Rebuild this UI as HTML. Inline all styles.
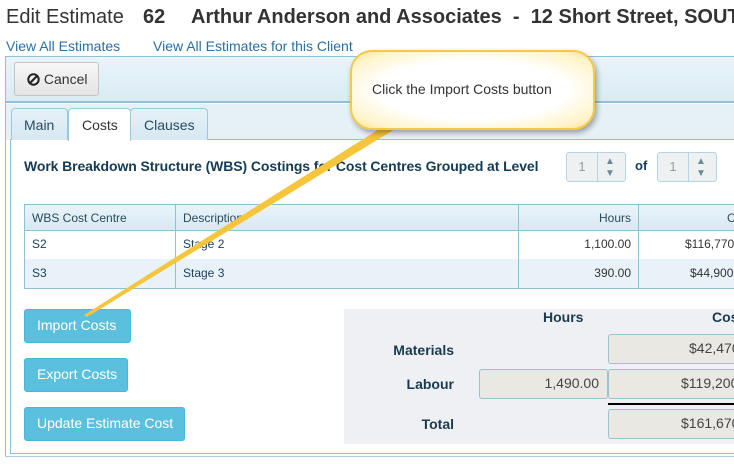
<!DOCTYPE html>
<html><head><meta charset="utf-8"><style>
*{box-sizing:border-box;margin:0;padding:0}
body{width:734px;height:464px;overflow:hidden;background:#fff;font-family:"Liberation Sans",Arial,sans-serif;position:relative}
.a{position:absolute;white-space:nowrap}
.btn{position:absolute;background:#5bc0de;border:1px solid #46b8da;border-radius:3px;color:#fff;font-size:14px;padding-left:12px;line-height:31px}
.inp{position:absolute;background:#eae8e2;border:1px solid #98c2d4;border-radius:3px;text-align:right;padding-right:8px;font-size:14px;color:#444;line-height:27px}
.lbl{position:absolute;font-weight:bold;font-size:14px;color:#1a3a50;text-align:right}
.td{position:absolute;font-size:12px;color:#1a4060}
.sp{position:absolute;left:38px;top:3px;font-size:10px;color:#6a8a9a;line-height:12px}
</style></head><body>
<div class="a" style="left:6px;top:6px;font-size:20px;color:#333">Edit Estimate</div>
<div class="a" style="left:143px;top:6px;font-size:20px;font-weight:bold;color:#333">62</div>
<div class="a" style="left:191px;top:6px;font-size:20px;font-weight:bold;color:#333">Arthur Anderson and Associates&nbsp; -&nbsp; 12 Short Street, SOUTH</div>
<div class="a" style="left:6px;top:38px;font-size:14px;color:#2a6ea6">View All Estimates</div>
<div class="a" style="left:153px;top:38px;font-size:14px;color:#2a6ea6">View All Estimates for this Client</div>

<div class="a" style="left:5px;top:56px;width:740px;height:401px;border:1px solid #8cc3dc;background:#fff"></div>
<div class="a" style="left:6px;top:57px;width:740px;height:46px;background:linear-gradient(#eaf4f9,#d9ebf4);border-bottom:2px solid #93c0d6"></div>
<div class="a" style="left:14px;top:62px;width:85px;height:34px;border:1px solid #c4c4c4;border-radius:3px;background:linear-gradient(#f7f7f7,#e4e4e4);font-size:14px;color:#333;line-height:32px;padding-left:12px">
<svg width="13" height="13" viewBox="0 0 13 13" style="vertical-align:-2px"><circle cx="6.5" cy="6.5" r="5.2" fill="none" stroke="#222" stroke-width="2"/><line x1="3" y1="10" x2="10" y2="3" stroke="#222" stroke-width="2"/></svg> Cancel</div>
<div class="a" style="left:6px;top:104px;width:740px;height:36px;background:#e6f1f7"></div>
<div class="a" style="left:10px;top:139px;width:740px;height:315px;border-left:1px solid #8cc3dc;border-top:1px solid #8cc3dc;border-bottom:1px solid #8cc3dc;background:#fff"></div>
<div class="a" style="left:11px;top:108px;width:57px;height:32px;border:1px solid #9cc8dc;border-bottom:none;border-radius:4px 4px 0 0;background:linear-gradient(#e6f1f7,#d6e8f2);font-size:14px;color:#2c4a60;padding:8px 0 0 12px">Main</div>
<div class="a" style="left:68px;top:108px;width:63px;height:33px;border:1px solid #9cc8dc;border-bottom:none;border-radius:4px 4px 0 0;background:#fff;font-size:14px;color:#333;padding:8px 0 0 13px">Costs</div>
<div class="a" style="left:130px;top:108px;width:78px;height:32px;border:1px solid #9cc8dc;border-bottom:none;border-radius:4px 4px 0 0;background:linear-gradient(#e6f1f7,#d6e8f2);font-size:14px;color:#2c4a60;padding:8px 0 0 13px">Clauses</div>

<div class="a" style="left:24px;top:158px;font-size:14px;font-weight:bold;color:#143a55;letter-spacing:-0.1px">Work Breakdown Structure (WBS) Costings for Cost Centres Grouped at Level</div>
<div class="a" style="left:566px;top:152px;width:60px;height:30px;border:1px solid #b5d3e2;border-radius:3px;background:#eef1f2"><span style="position:absolute;left:0;width:31px;border-right:1px solid #b5d3e2;height:28px;text-align:center;line-height:28px;font-size:13px;color:#999">1</span><span class="sp">▲<br>▼</span></div>
<div class="a" style="left:635px;top:158px;font-size:13px;font-weight:bold;color:#143a55">of</div>
<div class="a" style="left:657px;top:152px;width:60px;height:30px;border:1px solid #b5d3e2;border-radius:3px;background:#eef1f2"><span style="position:absolute;left:0;width:31px;border-right:1px solid #b5d3e2;height:28px;text-align:center;line-height:28px;font-size:13px;color:#999">1</span><span class="sp">▲<br>▼</span></div>

<div class="a" style="left:24px;top:204px;width:720px;height:85px;border:1px solid #8fc0d6;background:#fff"></div>
<div class="a" style="left:25px;top:205px;width:720px;height:26px;background:linear-gradient(#eaf4f9,#d7e9f2);border-bottom:1px solid #8fc0d6"></div>
<div class="a" style="left:25px;top:259px;width:720px;height:29px;background:#e8f2f8"></div>
<div class="a" style="left:175px;top:205px;width:1px;height:83px;background:#8fc0d6"></div>
<div class="a" style="left:518px;top:205px;width:1px;height:83px;background:#8fc0d6"></div>
<div class="a" style="left:638px;top:205px;width:1px;height:83px;background:#8fc0d6"></div>
<div class="td" style="left:32px;top:211px;color:#2a4a60">WBS Cost Centre</div>
<div class="td" style="left:183px;top:211px;color:#2a4a60">Description</div>
<div class="td" style="left:518px;width:113px;text-align:right;top:211px;color:#2a4a60">Hours</div>
<div class="td" style="left:727px;top:211px;color:#2a4a60">Cost</div>
<div class="td" style="left:32px;top:237px">S2</div><div class="td" style="left:183px;top:237px">Stage 2</div>
<div class="td" style="left:518px;width:113px;text-align:right;top:237px;color:#333">1,100.00</div>
<div class="td" style="left:685px;top:237px;color:#333">$116,770.00</div>
<div class="td" style="left:690px;top:266px;color:#333">$44,900.00</div>
<div class="td" style="left:32px;top:266px">S3</div><div class="td" style="left:183px;top:266px">Stage 3</div>
<div class="td" style="left:518px;width:113px;text-align:right;top:266px;color:#333">390.00</div>

<div class="btn" style="left:24px;top:309px;width:107px;height:34px">Import Costs</div>
<div class="btn" style="left:24px;top:358px;width:104px;height:34px">Export Costs</div>
<div class="btn" style="left:24px;top:407px;width:161px;height:34px">Update Estimate Cost</div>

<div class="a" style="left:344px;top:309px;width:400px;height:135px;background:#eef0f3"></div>
<div class="lbl" style="left:543px;top:309px">Hours</div>
<div class="lbl" style="left:712px;top:309px">Cost</div>
<div class="lbl" style="left:344px;width:110px;top:342px">Materials</div>
<div class="lbl" style="left:344px;width:110px;top:376px">Labour</div>
<div class="lbl" style="left:344px;width:110px;top:416px">Total</div>
<div class="inp" style="left:608px;top:334px;width:140px;height:30px;padding-right:0;text-align:left;padding-left:80px">$42,470.00</div>
<div class="inp" style="left:479px;top:369px;width:129px;height:30px">1,490.00</div>
<div class="inp" style="left:608px;top:369px;width:140px;height:30px;padding-right:0;text-align:left;padding-left:72px">$119,200.00</div>
<div class="a" style="left:608px;top:403px;width:130px;height:2px;background:#000"></div>
<div class="inp" style="left:608px;top:409px;width:140px;height:30px;padding-right:0;text-align:left;padding-left:72px">$161,670.00</div>
<div class="a" style="left:5px;top:456px;width:740px;height:1px;background:#a7cfe2"></div>

<svg class="a" style="left:0;top:0" width="734" height="464"><polygon points="384,126 400,126 87,317 84,315" fill="#f5c53c"/></svg>
<div class="a" style="left:350px;top:50px;width:245px;height:80px;border:2px solid #f6c848;border-radius:22px;background:radial-gradient(ellipse at center,#fff 55%,#fff3c8 85%,#fde08a 100%);box-shadow:2px 3px 6px rgba(0,0,0,.35);font-size:14px;color:#333;padding:29px 0 0 20px">Click the Import Costs button</div>
</body></html>
